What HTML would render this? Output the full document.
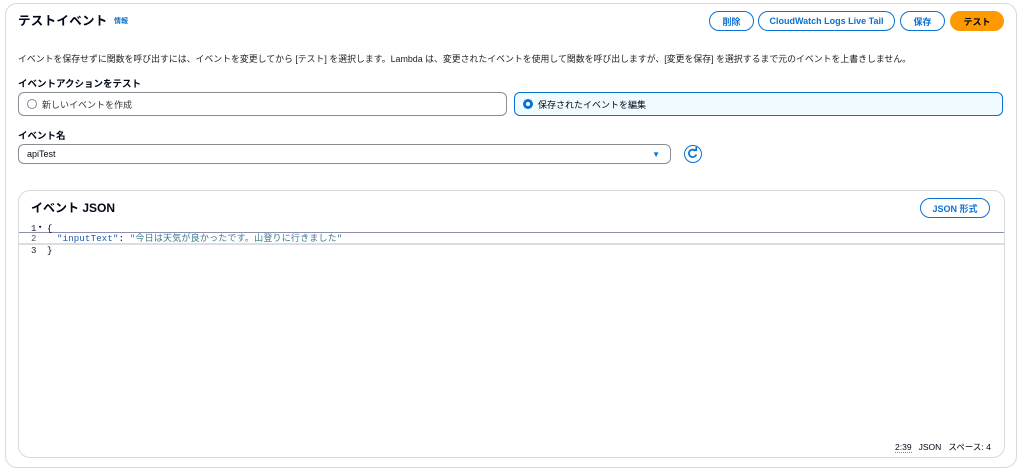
<!DOCTYPE html><html><head><meta charset="utf-8"><style>
*{box-sizing:border-box;margin:0;padding:0}
body{width:1024px;height:470px;background:#fff;font-family:"Liberation Sans","Noto Sans CJK JP",sans-serif;color:#000716;position:relative;overflow:hidden}
.a{position:absolute}
.outer{left:5px;top:3px;width:1012px;height:465px;border:1px solid #d5dbdb;border-radius:12px}
.btn{position:absolute;top:11px;height:20px;border:1.5px solid #0972d3;border-radius:12px;color:#0972d3;font-size:9px;font-weight:bold;display:flex;align-items:center;justify-content:center}
.box{border:1px solid #8c8c94;border-radius:6px;font-size:9px;display:flex;align-items:center}
.lbl{font-size:9.5px;font-weight:bold}
.rad{width:10px;height:10px;border-radius:50%;border:1.5px solid #7d8998;margin:0 5px 0 8px}
.mono{font-family:"Liberation Mono","Noto Sans CJK JP",monospace;font-size:9px}
</style></head><body>
<div class="a outer"></div>
<div class="a" style="left:18px;top:10px;font-size:12.5px;font-weight:bold;letter-spacing:0.3px">テストイベント</div>
<div class="a" style="left:114px;top:16px;font-size:7px;color:#0972d3;font-weight:bold">情報</div>
<div class="btn" style="left:709px;width:45px">削除</div>
<div class="btn" style="left:758px;width:137px">CloudWatch Logs Live Tail</div>
<div class="btn" style="left:900px;width:45px">保存</div>
<div class="btn" style="left:950px;width:54px;background:#ff9900;border-color:#ff9900;color:#000716">テスト</div>
<div class="a" style="left:18px;top:52px;font-size:8.9px;white-space:nowrap;color:#222">イベントを保存せずに関数を呼び出すには、イベントを変更してから [テスト] を選択します。Lambda は、変更されたイベントを使用して関数を呼び出しますが、[変更を保存] を選択するまで元のイベントを上書きしません。</div>
<div class="a lbl" style="left:18px;top:76px">イベントアクションをテスト</div>
<div class="a box" style="left:18px;top:92px;width:489px;height:24px;color:#333"><span class="rad"></span>新しいイベントを作成</div>
<div class="a box" style="left:514px;top:92px;width:489px;height:24px;background:#f0fbff;border-color:#0972d3"><span class="rad" style="border:3px solid #0972d3;background:#fff"></span>保存されたイベントを編集</div>
<div class="a lbl" style="left:18px;top:128px">イベント名</div>
<div class="a box" style="left:18px;top:144px;width:653px;height:20px;padding-left:8px">apiTest<span style="position:absolute;right:10px;color:#0972d3;font-size:8px">▼</span></div>
<div class="a" style="left:684px;top:145px;width:18px;height:18px;border:1.5px solid #0972d3;border-radius:50%"><svg width="15" height="15" viewBox="0 0 16 16" style="position:absolute;left:0;top:0"><path d="M11 5A4 4 0 1 0 12 9" fill="none" stroke="#0972d3" stroke-width="1.8"/><path d="M8.5 4.5h3.5V1" fill="none" stroke="#0972d3" stroke-width="1.8"/></svg></div>
<div class="a" style="left:18px;top:190px;width:987px;height:268px;border:1px solid #d5dbdb;border-radius:12px"></div>
<div class="a" style="left:31px;top:199px;font-size:12px;font-weight:bold">イベント JSON</div>
<div class="btn" style="left:920px;top:198px;width:70px">JSON 形式</div>
<div class="a" style="left:19px;top:232px;width:985px;height:1px;background:#8d8fb0"></div>
<div class="a" style="left:19px;top:243px;width:985px;height:2px;background:#dcdde4"></div>
<div class="a mono" style="left:31px;top:224px;color:#222">1</div><div class="a mono" style="left:38px;top:223px;font-size:7px">▾</div><div class="a mono" style="left:47px;top:224px">{</div>
<div class="a mono" style="left:31px;top:234px;color:#555">2</div>
<div class="a mono" style="left:57px;top:231px;white-space:nowrap;letter-spacing:0.2px"><span style="color:#1a5aa6">"inputText"</span>: <span style="color:#3a7a8a">"今日は天気が良かったです。山登りに行きました"</span></div>
<div class="a mono" style="left:31px;top:246px;color:#222">3</div><div class="a mono" style="left:47px;top:246px">}</div>
<div class="a" style="left:895px;top:441px;font-size:8.5px;white-space:nowrap"><span style="border-bottom:1px dotted #888">2:39</span>&nbsp;&nbsp; JSON &nbsp;&nbsp;スペース: 4</div>
</body></html>
